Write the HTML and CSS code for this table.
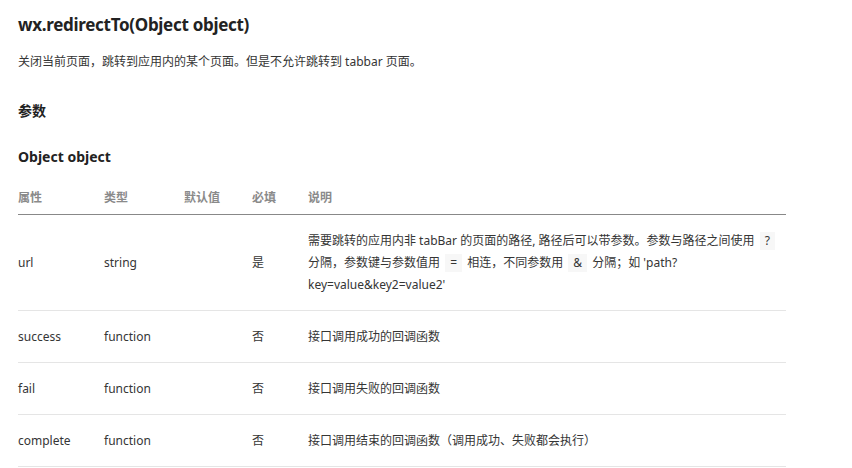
FILE: index.html
```html
<!DOCTYPE html>
<html>
  <head>
    <meta charset="utf-8" />
    <meta name="viewport" content="width=device-width, initial-scale=1" />
    <link rel="stylesheet" href="styles.css">
  </head>

  <body>
    <div class="doc">
      <h1>wx.redirectTo(Object object)</h1>
      <p class="intro">关闭当前页面，跳转到应用内的某个页面。但是不允许跳转到 tabbar 页面。</p>
      <h2>参数</h2>
      <h3>Object object</h3>
      <table class="params">
        <colgroup>
          <col class="c-name">
          <col class="c-type">
          <col class="c-def">
          <col class="c-req">
          <col>
        </colgroup>
        <thead>
          <tr><th>属性</th><th>类型</th><th>默认值</th><th>必填</th><th>说明</th></tr>
        </thead>
        <tbody>
          <tr>
            <td>url</td><td>string</td><td></td><td>是</td>
            <td><span>需要跳转的应用内非 tabBar 的页面的路径, 路径后可以带参数。参数与路径之间使用</span> <code>?</code> <span>分隔，参数键与参数值用</span> <code>=</code> <span>相连，不同参数用</span> <code>&amp;</code> <span>分隔；如 'path?</span><wbr><span>key=value&amp;key2=value2'</span></td>
          </tr>
          <tr>
            <td>success</td><td>function</td><td></td><td>否</td><td>接口调用成功的回调函数</td>
          </tr>
          <tr>
            <td>fail</td><td>function</td><td></td><td>否</td><td>接口调用失败的回调函数</td>
          </tr>
          <tr>
            <td>complete</td><td>function</td><td></td><td>否</td><td>接口调用结束的回调函数（调用成功、失败都会执行）</td>
          </tr>
        </tbody>
      </table>
    </div>
  </body>
</html>
```

FILE: styles.css
```css
body {
  margin: 0;
  background: #fff;
  color: #353535;
  font-family: "Noto Sans", "Noto Sans CJK SC", sans-serif;
  font-size: 12px;
}
.doc {
  width: 768px;
  padding: 13px 18px;
}
h1 {
  margin: 0;
  font-size: 17px;
  letter-spacing: -0.3px;
  line-height: 24px;
  font-weight: bold;
  color: #222;
}
.intro {
  margin: 13px 0 0;
  line-height: 24px;
}
h2 {
  margin: 25px 0 0;
  font-size: 14px;
  line-height: 24px;
  color: #222;
}
h3 {
  margin: 22px 0 0;
  font-size: 14px;
  line-height: 24px;
  color: #222;
}
.params {
  width: 100%;
  margin-top: 18px;
  border-collapse: collapse;
  table-layout: fixed;
}
.c-name { width: 86px; }
.c-type { width: 80px; }
.c-def { width: 68px; }
.c-req { width: 56px; }
.params th {
  text-align: left;
  font-weight: bold;
  color: #8a8a8a;
  line-height: 22px;
  padding: 0 0 5px;
  border-bottom: 1px solid #888;
}
.params td {
  line-height: 22px;
  padding: 15px 0 14px;
  border-bottom: 1px solid #e5e5e5;
  vertical-align: middle;
}
code {
  display: inline-block;
  font-family: "Noto Sans", "Noto Sans CJK SC", sans-serif;
  font-size: 12px;
  line-height: 18px;
  background: #f7f7f7;
  padding: 0 5px;
  margin: 0 2px;
  color: #353535;
}
```
